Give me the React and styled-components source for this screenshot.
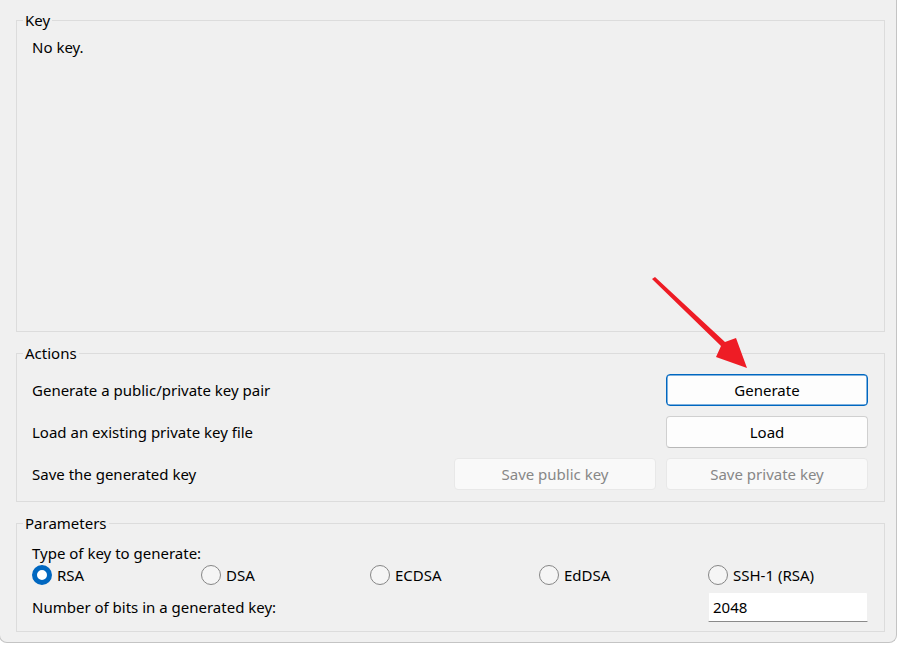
import React, { useState } from 'react';
import styled, { createGlobalStyle } from 'styled-components';

const GlobalStyle = createGlobalStyle`
  html, body {
    margin: 0;
    padding: 0;
    background: #ffffff;
  }
  body {
    font-family: "Segoe UI", "Noto Sans", sans-serif;
    font-size: 15px;
    color: #000000;
  }
`;

const Window = styled.div`
  position: relative;
  box-sizing: border-box;
  width: 898px;
  height: 643px;
  margin-left: -1px;
  padding: 0 11px 0 16px;
  background: #f0f0f0;
  border: 1px solid #c4c4c4;
  border-top: none;
  border-radius: 0 0 8px 8px;
  overflow: hidden;
`;

const Group = styled.div`
  position: relative;
  box-sizing: border-box;
  margin-top: ${p => p.$top}px;
  height: ${p => p.$height}px;
  border: 1px solid #dcdcdc;
  padding: ${p => p.$pad};
`;

const Legend = styled.span`
  position: absolute;
  top: -11px;
  left: 6px;
  padding: 0 2px;
  background: #f0f0f0;
  line-height: 20px;
`;

const Text = styled.div`
  line-height: 20px;
`;

const ActionGrid = styled.div`
  display: grid;
  grid-template-columns: 1fr 202px 202px;
  grid-auto-rows: 32px;
  column-gap: 10px;
  row-gap: 10px;
  align-items: center;
`;

const RowLabel = styled.div`
  grid-column: ${p => p.$span};
  line-height: 20px;
`;

const Button = styled.button`
  box-sizing: border-box;
  height: 32px;
  width: 202px;
  font-family: inherit;
  font-size: 15px;
  border-radius: 4px;
  padding: 0;
  background: ${p => (p.disabled ? '#f9f9f9' : '#fdfdfd')};
  color: ${p => (p.disabled ? '#878787' : '#000000')};
  border: 1px solid
    ${p => (p.$primary ? '#0067c0' : p.disabled ? '#e8e8e8' : '#d0d0d0')};
  border-bottom-color: ${p =>
    p.$primary ? '#0067c0' : p.disabled ? '#e8e8e8' : '#b8b8b8'};
  box-shadow: ${p => (p.$primary ? 'inset 0 0 0 0.5px #0067c0' : 'none')};
`;

const RadioRow = styled.div`
  display: grid;
  grid-template-columns: repeat(5, 169px);
  height: 24px;
  align-items: center;
`;

const RadioLabel = styled.label`
  display: flex;
  align-items: center;
  gap: 5px;
  line-height: 20px;
  cursor: default;
`;

const RadioDot = styled.span`
  box-sizing: border-box;
  width: 20px;
  height: 20px;
  border-radius: 50%;
  background: ${p => (p.$on ? '#ffffff' : '#f5f5f5')};
  border: ${p => (p.$on ? '5px solid #0067c0' : '1px solid #868686')};
`;

const BitsRow = styled.div`
  display: flex;
  justify-content: space-between;
  align-items: center;
  margin-top: 5px;
`;

const BitsInput = styled.div`
  box-sizing: border-box;
  width: 160px;
  height: 30px;
  background: #ffffff;
  border: 1px solid #f0f0f0;
  border-bottom: 1px solid #8a8a8a;
  padding: 0 4px;
  line-height: 28px;
  border-radius: 2px 2px 0 0;
`;

const Arrow = styled.svg`
  position: absolute;
  top: 0;
  left: 1px;
  pointer-events: none;
`;

const keyTypes = ['RSA', 'DSA', 'ECDSA', 'EdDSA', 'SSH-1 (RSA)'];

export default function App() {
  const [type, setType] = useState('RSA');

  return (
    <>
      <GlobalStyle />
      <Window>
        <Group $top={20} $height={312} $pad="16px 15px">
          <Legend>Key</Legend>
          <Text>No key.</Text>
        </Group>

        <Group $top={21} $height={149} $pad="20px 16px 0 15px">
          <Legend>Actions</Legend>
          <ActionGrid>
            <RowLabel $span="1 / 3">Generate a public/private key pair</RowLabel>
            <Button $primary>Generate</Button>
            <RowLabel $span="1 / 3">Load an existing private key file</RowLabel>
            <Button>Load</Button>
            <RowLabel $span="1 / 2">Save the generated key</RowLabel>
            <Button disabled>Save public key</Button>
            <Button disabled>Save private key</Button>
          </ActionGrid>
        </Group>

        <Group $top={21} $height={109} $pad="19px 16px 0 15px">
          <Legend>Parameters</Legend>
          <Text>Type of key to generate:</Text>
          <RadioRow>
            {keyTypes.map(k => (
              <RadioLabel key={k} onClick={() => setType(k)}>
                <RadioDot $on={type === k} />
                {k}
              </RadioLabel>
            ))}
          </RadioRow>
          <BitsRow>
            <Text>Number of bits in a generated key:</Text>
            <BitsInput>2048</BitsInput>
          </BitsRow>
        </Group>

        <Arrow width="900" height="645" viewBox="0 0 900 645">
          <polygon
            fill="#ee1c25"
            points="651,279 654,277 724,342 735,338 746,368 715,357 720,346"
          />
        </Arrow>
      </Window>
    </>
  );
}
